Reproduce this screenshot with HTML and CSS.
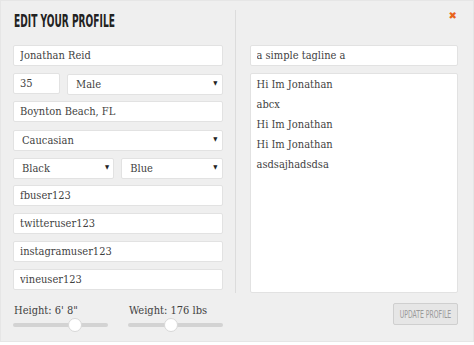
FILE: index.html
```html
<!DOCTYPE html>
<html lang="en">
<head>
    <meta charset="UTF-8">
    <title>Edit Your Profile</title>
    <link rel="stylesheet" href="styles.css">
</head>
<body>
    <div class="panel">
        <div class="top">
            <div class="col-left">
                <h1 class="title">EDIT YOUR PROFILE</h1>
                <input class="field" type="text" value="Jonathan Reid">
                <div class="row">
                    <input class="field age" type="text" value="35">
                    <div class="select grow">
                        <select><option>Male</option></select>
                    </div>
                </div>
                <input class="field" type="text" value="Boynton Beach, FL">
                <div class="select">
                    <select><option>Caucasian</option></select>
                </div>
                <div class="row">
                    <div class="select grow">
                        <select><option>Black</option></select>
                    </div>
                    <div class="select grow">
                        <select><option>Blue</option></select>
                    </div>
                </div>
                <input class="field" type="text" value="fbuser123">
                <input class="field" type="text" value="twitteruser123">
                <input class="field" type="text" value="instagramuser123">
                <input class="field" type="text" value="vineuser123">
            </div>

            <div class="divider"></div>

            <div class="col-right">
                <div class="close-row"><span class="close">&#10006;</span></div>
                <input class="field" type="text" value="a simple tagline a">
                <div class="bio">
                    <p>Hi Im Jonathan</p>
                    <p>abcx</p>
                    <p>Hi Im Jonathan</p>
                    <p>Hi Im Jonathan</p>
                    <p>asdsajhadsdsa</p>
                </div>
            </div>
        </div>

        <div class="bottom">
            <div class="sliders">
                <div class="slider">
                    <label>Height: 6' 8"</label>
                    <input type="range" min="0" max="100" value="68">
                </div>
                <div class="slider">
                    <label>Weight: 176 lbs</label>
                    <input type="range" min="0" max="100" value="44">
                </div>
            </div>
            <button class="update"><span>UPDATE PROFILE</span></button>
        </div>
    </div>
</body>
</html>
```

FILE: styles.css
```css
* {
    margin: 0;
    padding: 0;
    box-sizing: border-box;
}

body {
    background-color: #fff;
    font-family: "DejaVu Serif Condensed", "DejaVu Serif", serif;
    color: #3f3f3f;
}

.panel {
    width: 474px;
    height: 342px;
    background-color: #efefef;
    border: 1px solid #e6e6e6;
    padding: 9px 15px 0 12px;
}

.top {
    display: flex;
    height: 283px;
}

.col-left {
    width: 210px;
    display: flex;
    flex-direction: column;
    gap: 7px;
}

.title {
    font-family: "DejaVu Sans Condensed", "Liberation Sans Narrow", sans-serif;
    font-weight: bold;
    font-size: 18px;
    line-height: 20px;
    color: #222;
    height: 28px;
    padding: 1px 0 0 2px;
    white-space: nowrap;
    transform: scaleX(0.56);
    transform-origin: left;
}

.divider {
    width: 1px;
    background-color: #dcdcdc;
    margin: 0 14px 0 12px;
}

.col-right {
    width: 209px;
    display: flex;
    flex-direction: column;
    gap: 7px;
}

.close-row {
    height: 28px;
    display: flex;
    justify-content: flex-end;
    padding: 0 1px 0 0;
}

.close {
    color: #e8641b;
    font-family: "DejaVu Sans", sans-serif;
    font-size: 10px;
    font-weight: bold;
    line-height: 12px;
}

.field {
    height: 21px;
    width: 100%;
    border: 1px solid #e2e2e2;
    border-radius: 2px;
    background-color: #fff;
    font-family: inherit;
    font-size: 11px;
    color: #3f3f3f;
    padding: 0 6px;
    outline: none;
}

.row {
    display: flex;
    gap: 7px;
}

.age {
    width: 47px;
    flex: none;
}

.grow {
    flex: 1;
}

.select {
    position: relative;
    height: 21px;
}

.select select {
    appearance: none;
    -webkit-appearance: none;
    width: 100%;
    height: 21px;
    border: 1px solid #e2e2e2;
    border-radius: 2px;
    background-color: #fff;
    font-family: inherit;
    font-size: 11px;
    color: #3f3f3f;
    padding: 0 8px;
    outline: none;
}

.select::after {
    content: "\25BC";
    position: absolute;
    right: 5px;
    top: 6px;
    font-size: 6px;
    color: #222;
    pointer-events: none;
}

.bio {
    flex: 1;
    background-color: #fff;
    border: 1px solid #e2e2e2;
    border-radius: 2px;
    padding: 1px 6px;
    font-size: 11px;
    line-height: 20px;
}

.bottom {
    display: flex;
    justify-content: space-between;
    padding-top: 11px;
}

.sliders {
    width: 210px;
    display: flex;
    justify-content: space-between;
}

.slider {
    width: 95px;
    display: flex;
    flex-direction: column;
}

.slider label {
    font-size: 11px;
    color: #3f3f3f;
    height: 14px;
    padding-left: 1px;
}

.slider input {
    -webkit-appearance: none;
    appearance: none;
    width: 95px;
    height: 14px;
    background: transparent;
}

.slider input::-webkit-slider-runnable-track {
    height: 4px;
    background-color: #d3d3d3;
    border-radius: 2px;
}

.slider input::-webkit-slider-thumb {
    -webkit-appearance: none;
    width: 14px;
    height: 14px;
    border-radius: 50%;
    background-color: #fff;
    border: 1px solid #d8d8d8;
    margin-top: -5px;
}

.update {
    width: 65px;
    height: 22px;
    margin-top: -1px;
    background-color: #e6e6e6;
    border: 1px solid #cfcfcf;
    border-radius: 2px;
    display: flex;
    align-items: center;
    justify-content: center;
    overflow: hidden;
}

.update span {
    font-family: "DejaVu Sans Condensed", "Liberation Sans Narrow", sans-serif;
    font-size: 11px;
    color: #9a9a9a;
    white-space: nowrap;
    transform: scaleX(0.62);
}
```
